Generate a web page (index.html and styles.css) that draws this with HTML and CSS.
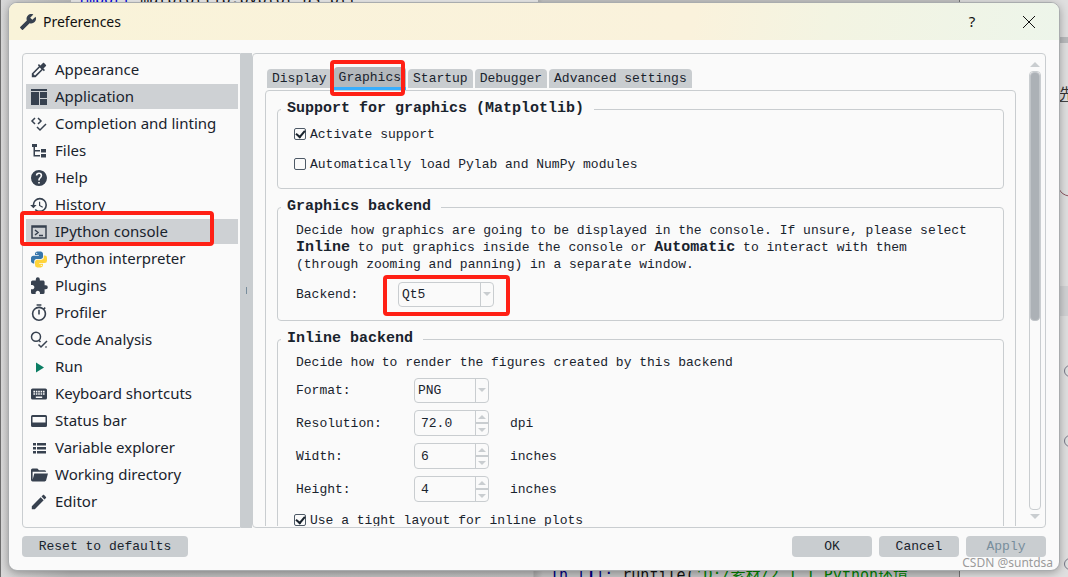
FILE: index.html
```html
<!DOCTYPE html>
<html lang="en">
<head>
    <meta charset="UTF-8">
    <meta name="viewport" content="width=device-width, initial-scale=1.0">
    <title>Preferences</title>
    <link rel="stylesheet" href="styles.css">
</head>
<body>

    <!-- editor window behind the dialog -->
    <div class="backdrop" aria-hidden="true">
        <div class="editor-page"></div>
        <div class="side-page"></div>
        <div class="side-bar"></div>
        <div class="side-row"></div>
        <code class="code-top"><b>import</b> matplotlib.pyplot as plt</code>
        <code class="code-bottom"><i>In [</i><b>1</b><i>]:</i> runfile(<span>'D:/素材/2_1_1_Python环境</span></code>
        <span class="side-text">先</span>
        <svg class="side-arc" viewBox="0 0 10 10" width="10" height="10">
            <path d="M0,2Q3,8 10,9" stroke="#8a5560"/>
        </svg>
        <span class="side-dot"></span>
        <span class="side-dot side-dot-low"></span>
        <span class="side-dot side-dot-end"></span>
    </div>

    <div class="dialog">
        <header class="titlebar">
            <svg class="title-icon" viewBox="1 1 22 22"><path transform="matrix(-1 0 0 1 24 0)" d="M22.7,19L13.6,9.9C14.5,7.6 14,4.9 12.1,3C10.1,1 7.1,0.6 4.7,1.7L9,6L6,9L1.6,4.7C0.4,7.1 0.9,10.1 2.9,12.1C4.8,14 7.5,14.5 9.8,13.6L18.9,22.7C19.3,23.1 19.9,23.1 20.3,22.7L22.6,20.4C23.1,20 23.1,19.3 22.7,19Z"/></svg>
            <h1>Preferences</h1>
            <button class="title-btn" type="button">?</button>
            <button class="title-btn" type="button" aria-label="Close">
                <svg class="close-icon" viewBox="0 0 14 14"><path d="M1,1L13,13M13,1L1,13"/></svg>
            </button>
        </header>

        <main class="content">
            <nav class="pages">
                <ul>
                    <li><a href="#"><svg viewBox="2 2 20 20"><path d="M6.92,19L5,17.08L13.06,9L15,10.94M20.71,5.63L18.37,3.29C18,2.9 17.35,2.9 16.96,3.29L13.84,6.41L11.91,4.5L10.5,5.91L11.92,7.33L3,16.25V21H7.75L16.67,12.08L18.09,13.5L19.5,12.09L17.58,10.17L20.7,7.05C21.1,6.65 21.1,6 20.71,5.63Z"/></svg>Appearance</a></li>
                    <li><a href="#" class="selected"><svg viewBox="0 0 16 16"><path d="M0,0H16V2H0ZM0,3H8V16H0ZM9,3H16V9H9ZM9,10H16V16H9Z"/></svg>Application</a></li>
                    <li><a href="#"><svg class="line" viewBox="0 0 16 16"><path d="M4,2L1,5L4,8M7,2L10,5L7,8M6,11L9,14L15,8"/></svg>Completion and linting</a></li>
                    <li><a href="#"><svg viewBox="0 0 16 16"><path d="M1,1H6V4H1ZM2.500,4H4V7H9V8.500H4V12H9V13.500H2.500ZM10,6H15V9.500H10ZM10,11H15V14.500H10Z"/></svg>Files</a></li>
                    <li><a href="#"><svg viewBox="2 2 20 20"><path d="M15.07,11.25L14.17,12.17C13.45,12.89 13,13.5 13,15H11V14.5C11,13.39 11.45,12.39 12.17,11.67L13.41,10.41C13.78,10.05 14,9.55 14,9C14,7.89 13.1,7 12,7A2,2 0 0,0 10,9H8A4,4 0 0,1 12,5A4,4 0 0,1 16,9C16,9.88 15.64,10.67 15.07,11.25M13,19H11V17H13M12,2A10,10 0 0,0 2,12A10,10 0 0,0 12,22A10,10 0 0,0 22,12C22,6.47 17.5,2 12,2Z"/></svg>Help</a></li>
                    <li><a href="#"><svg viewBox="2 2 20 20"><path d="M13.5,8H12V13L16.28,15.54L17,14.33L13.5,12.25V8M13,3A9,9 0 0,0 4,12H1L4.96,16.03L9,12H6A7,7 0 0,1 13,5A7,7 0 0,1 20,12A7,7 0 0,1 13,19C11.07,19 9.32,18.21 8.06,16.94L6.64,18.36C8.27,20 10.5,21 13,21A9,9 0 0,0 22,12A9,9 0 0,0 13,3"/></svg>History</a></li>
                    <li class="marked"><a href="#" class="selected"><svg class="line" viewBox="0 0 16 16"><path d="M1,2H15V14H1ZM1,3H15M4,6L7,8.500L4,11M8,11.500H12"/></svg>IPython console</a><span class="mark mark-page"></span></li>
                    <li><a href="#"><svg viewBox="2 2 20 20"><path fill="#3776ab" d="M4.86,17.5C3.28,17.5 2,16.22 2,14.64V10.86C2,9.28 3.28,8 4.86,8H12C12,7.61 11.68,7.04 11.29,7.04H7V5.36C7,3.78 8.28,2.5 9.86,2.5H14.14C15.72,2.5 17,3.78 17,5.36V9.11C17,10.69 15.72,11.96 14.14,11.96H8.89C7.31,11.96 6.04,13.24 6.04,14.82V17.5H4.86M9.14,5.71A0.8,0.8 0 0,0 9.14,4.11A0.8,0.8 0 0,0 9.14,5.71Z"/><path fill="#ffd43b" d="M19.14,7.5A2.86,2.86 0 0,1 22,10.36V14.14A2.86,2.86 0 0,1 19.14,17H12C12,17.39 12.32,17.96 12.71,17.96H17V19.64A2.86,2.86 0 0,1 14.14,22.5H9.86A2.86,2.86 0 0,1 7,19.64V15.89C7,14.31 8.28,13.04 9.86,13.04H15.11C16.69,13.04 17.96,11.76 17.96,10.18V7.5H19.14M14.86,19.29A0.8,0.8 0 0,0 14.86,20.89A0.8,0.8 0 0,0 14.86,19.29Z"/></svg>Python interpreter</a></li>
                    <li><a href="#"><svg viewBox="2 2 20 20"><path d="M20.5,11H19V7C19,5.89 18.1,5 17,5H13V3.5A2.5,2.5 0 0,0 10.5,1A2.5,2.5 0 0,0 8,3.5V5H4A2,2 0 0,0 2,7V10.8H3.5C5,10.8 6.2,12 6.2,13.5C6.2,15 5,16.2 3.5,16.2H2V20A2,2 0 0,0 4,22H7.8V20.5C7.8,19 9,17.8 10.5,17.8C12,17.8 13.2,19 13.2,20.5V22H17A2,2 0 0,0 19,20V16H20.5A2.5,2.5 0 0,0 23,13.5A2.5,2.5 0 0,0 20.5,11Z"/></svg>Plugins</a></li>
                    <li><a href="#"><svg viewBox="2 2 20 20"><path d="M12,20A7,7 0 0,1 5,13A7,7 0 0,1 12,6A7,7 0 0,1 19,13A7,7 0 0,1 12,20M19.03,7.39L20.45,5.97C20,5.46 19.55,5 19.04,4.56L17.62,6C16.07,4.74 14.12,4 12,4A9,9 0 0,0 3,13A9,9 0 0,0 12,22C17,22 21,17.97 21,13C21,10.88 20.26,8.93 19.03,7.39M11,14H13V8H11M15,1H9V3H15V1Z"/></svg>Profiler</a></li>
                    <li><a href="#"><svg class="line" viewBox="0 0 16 16"><path d="M9.500,4.800A4.500,4.500 0 1,1 0.500,4.800A4.500,4.500 0 1,1 9.500,4.800ZM8,8.500L9.500,10M7.500,12.500L10,15L16,9M14.500,14.500L15.500,15.500"/></svg>Code Analysis</a></li>
                    <li><a href="#"><svg viewBox="0 0 16 16"><path fill="#0a7d63" d="M5,3.500L13,8.500L5,13.500Z"/></svg>Run</a></li>
                    <li><a href="#"><svg viewBox="2 2 20 20"><path d="M19,10H17V8H19M19,13H17V11H19M16,10H14V8H16M16,13H14V11H16M16,17H8V15H16M7,10H5V8H7M7,13H5V11H7M8,11H10V13H8M8,8H10V10H8M11,11H13V13H11M11,8H13V10H11M20,5H4C2.89,5 2,5.89 2,7V17A2,2 0 0,0 4,19H20A2,2 0 0,0 22,17V7C22,5.89 21.1,5 20,5Z"/></svg>Keyboard shortcuts</a></li>
                    <li><a href="#"><svg viewBox="0 0 16 16"><path fill-rule="evenodd" d="M1.500,2H14.500A1.500,1.500 0 0,1 16,3.500V12.500A1.500,1.500 0 0,1 14.500,14H1.500A1.500,1.500 0 0,1 0,12.500V3.500A1.500,1.500 0 0,1 1.500,2ZM1.500,4V9.500H14.500V4Z"/></svg>Status bar</a></li>
                    <li><a href="#"><svg viewBox="0 0 16 16"><path d="M2,3H5V5.500H2ZM6,3H15V5.500H6ZM2,7H5V9.500H2ZM6,7H15V9.500H6ZM2,11H5V13.500H2ZM6,11H15V13.500H6Z"/></svg>Variable explorer</a></li>
                    <li><a href="#"><svg viewBox="2 2 20 20"><path d="M19,20H4C2.89,20 2,19.1 2,18V6C2,4.89 2.89,4 4,4H10L12,6H19A2,2 0 0,1 21,8H21L4,8V18L6.14,10H23.21L20.93,18.5C20.7,19.37 19.92,20 19,20Z"/></svg>Working directory</a></li>
                    <li><a href="#"><svg viewBox="2 2 20 20"><path d="M20.71,7.04C21.1,6.65 21.1,6 20.71,5.63L18.37,3.29C18,2.9 17.35,2.9 16.96,3.29L15.12,5.12L18.87,8.87M3,17.25V21H6.75L17.81,9.93L14.06,6.18L3,17.25Z"/></svg>Editor</a></li>
                </ul>
            </nav>

            <div class="splitter"><span></span></div>

            <section class="page">
                <div class="page-view">
                    <div class="tabs">
                        <button class="tab" type="button">Display</button>
                        <div class="marked">
                            <button class="tab active" type="button">Graphics</button>
                            <span class="mark mark-tab"></span>
                        </div>
                        <button class="tab" type="button">Startup</button>
                        <button class="tab" type="button">Debugger</button>
                        <button class="tab" type="button">Advanced settings</button>
                    </div>

                    <div class="tab-page">
                        <fieldset class="group group-support">
                            <legend>Support for graphics (Matplotlib)</legend>
                            <label class="check"><input type="checkbox" checked>Activate support</label>
                            <label class="check"><input type="checkbox">Automatically load Pylab and NumPy modules</label>
                        </fieldset>

                        <fieldset class="group group-backend">
                            <legend>Graphics backend</legend>
                            <p>Decide how graphics are going to be displayed in the console. If unsure, please select <br><b>Inline</b> to put graphics inside the console or <b>Automatic</b> to interact with them <br>(through zooming and panning) in a separate window.</p>
                            <div class="row row-backend">
                                <label for="backend">Backend:</label>
                                <div class="combo marked">
                                    <select id="backend">
                                        <option>Qt5</option>
                                    </select>
                                    <span class="combo-arrow"></span>
                                    <span class="mark mark-backend"></span>
                                </div>
                            </div>
                        </fieldset>

                        <fieldset class="group group-inline">
                            <legend>Inline backend</legend>
                            <p>Decide how to render the figures created by this backend</p>
                            <div class="row">
                                <label for="format">Format:</label>
                                <div class="combo">
                                    <select id="format">
                                        <option>PNG</option>
                                    </select>
                                    <span class="combo-arrow"></span>
                                </div>
                            </div>
                            <div class="row">
                                <label for="resolution">Resolution:</label>
                                <div class="spin">
                                    <input type="number" id="resolution" value="72.0" step="0.1">
                                    <div class="spin-buttons">
                                        <button class="up" type="button" aria-label="Increase"></button>
                                        <button class="down" type="button" aria-label="Decrease"></button>
                                    </div>
                                </div>
                                <span class="unit">dpi</span>
                            </div>
                            <div class="row">
                                <label for="width">Width:</label>
                                <div class="spin">
                                    <input type="number" id="width" value="6">
                                    <div class="spin-buttons">
                                        <button class="up" type="button" aria-label="Increase"></button>
                                        <button class="down" type="button" aria-label="Decrease"></button>
                                    </div>
                                </div>
                                <span class="unit">inches</span>
                            </div>
                            <div class="row">
                                <label for="height">Height:</label>
                                <div class="spin">
                                    <input type="number" id="height" value="4">
                                    <div class="spin-buttons">
                                        <button class="up" type="button" aria-label="Increase"></button>
                                        <button class="down" type="button" aria-label="Decrease"></button>
                                    </div>
                                </div>
                                <span class="unit">inches</span>
                            </div>
                            <label class="check"><input type="checkbox" checked>Use a tight layout for inline plots</label>
                        </fieldset>
                    </div>
                </div>

                <div class="scrollbar">
                    <span class="arrow-up"></span>
                    <div class="track"><div class="thumb"></div></div>
                    <span class="arrow-down"></span>
                </div>
            </section>
        </main>

        <footer class="buttons">
            <button class="btn btn-reset" type="button">Reset to defaults</button>
            <button class="btn" type="button">OK</button>
            <button class="btn" type="button">Cancel</button>
            <button class="btn" type="button" disabled>Apply</button>
        </footer>
    </div>

    <span class="watermark">CSDN @suntdsa</span>

</body>
</html>
```

FILE: styles.css
```css
* {
    box-sizing: border-box;
}

body {
    margin: 0;
    height: 100vh;
    padding: 2px 8px 6px;
    display: flex;
    position: relative;
    overflow: hidden;
    background-color: #d2d2d2;
    color: #19232d;
    font-family: "Liberation Mono", monospace;
    font-size: 13px;
    line-height: 17px;
}

button, input, select {
    font: inherit;
    color: inherit;
    margin: 0;
    padding: 0;
    border: none;
    background: none;
}

/* window behind */
.backdrop {
    position: absolute;
    inset: 0;
    overflow: hidden;
    border-left: 1px solid #6e6e6e;
    background: linear-gradient(90deg, #d8d8d8 0, #bdbdbd 70px, #c0c0c0 532px, #a8a8a8 533px, #c4c4c4 542px, #c4c4c4 100%);
}

.editor-page {
    position: absolute;
    left: 70px;
    right: 530px;
    top: 0;
    height: 4px;
    background-color: #ececec;
}

.side-page {
    position: absolute;
    right: 0;
    top: 0;
    bottom: 0;
    width: 109px;
    background-color: #dfdfdf;
    border-left: 1px solid #777;
}

.side-bar,
.side-row {
    position: absolute;
    right: 0;
    top: 37px;
    width: 20px;
    height: 6px;
    background-color: #b8babc;
}

.side-row {
    top: 286px;
    height: 30px;
    background-color: #d0d1d3;
}

.code-top,
.code-bottom {
    position: absolute;
    font: 15px/18px "DejaVu Sans Mono", "Noto Sans CJK SC", monospace;
    color: #111;
    white-space: pre;
}

.code-top {
    left: 76px;
    top: -10px;
}

.code-top b {
    font-weight: normal;
    color: #0000e0;
}

.code-bottom {
    left: 549px;
    top: 566px;
}

.code-bottom i,
.code-bottom b {
    font-style: normal;
    color: #000080;
}

.code-bottom span {
    color: #008000;
}

.side-text {
    position: absolute;
    right: -6px;
    top: 84px;
    border-bottom: 1px solid #444;
    font: 15px/17px "Noto Sans CJK SC", sans-serif;
    color: #333;
}

.side-arc {
    position: absolute;
    right: -1px;
    top: 187px;
    fill: none;
}

.side-dot {
    position: absolute;
    right: -8px;
    top: 365px;
    width: 12px;
    height: 12px;
    border: 1px solid #778;
    border-radius: 50%;
}

.side-dot-low {
    top: 435px;
}

.side-dot-end {
    top: 558px;
}

/* dialog */
.dialog {
    position: relative;
    flex: 1;
    min-width: 0;
    display: flex;
    flex-direction: column;
    background-color: #fafafa;
    border: 1px solid #a9acae;
    border-radius: 9px;
    box-shadow: 0 2px 8px rgba(0, 0, 0, 0.3);
    overflow: hidden;
}

.titlebar {
    flex: none;
    display: flex;
    align-items: center;
    height: 37px;
    padding: 0 6px 0 11px;
    background: linear-gradient(100deg, #f9f3d9 0%, #faf2dc 65%, #f3f4e2 78%, #edf5ea 100%);
}

.title-icon {
    width: 16px;
    height: 16px;
    fill: #37414f;
}

.titlebar h1 {
    flex: 1;
    margin: 0 0 0 7px;
    font: 14px/20px "Noto Sans", sans-serif;
    color: #111;
}

.title-btn {
    display: flex;
    align-items: center;
    justify-content: center;
    width: 48px;
    height: 36px;
    margin-left: 9px;
    font-family: "Noto Sans", sans-serif;
    font-size: 15px;
    color: #111;
}

.close-icon {
    width: 14px;
    height: 14px;
    fill: none;
    stroke: #111;
}

.content {
    flex: 1;
    min-height: 0;
    display: flex;
    padding: 13px 13px 0;
}

.pages {
    flex: 0 0 219px;
    padding: 3px;
    border: 1px solid #c9cdd0;
    border-radius: 4px 0 0 4px;
}

.pages ul {
    list-style: none;
    margin: 0;
    padding: 0;
    display: flex;
    flex-direction: column;
    gap: 2px;
}

.pages a {
    display: flex;
    align-items: center;
    gap: 8px;
    height: 25px;
    margin-right: -1px;
    padding-left: 5px;
    font-family: "Noto Sans", sans-serif;
    font-size: 15px;
    color: #19232d;
    text-decoration: none;
}

.pages a.selected {
    background-color: #ced1d4;
}

.pages svg {
    width: 16px;
    height: 16px;
    overflow: visible;
    fill: #37414f;
}

.pages svg.line {
    fill: none;
    stroke: #37414f;
    stroke-width: 1.5;
}

.splitter {
    flex: 0 0 11px;
    display: flex;
    align-items: center;
    justify-content: center;
    background-color: #c9cdd0;
}

.splitter span {
    width: 1px;
    height: 7px;
    background-color: #788d9c;
}

.page {
    flex: 1;
    min-width: 0;
    display: flex;
    justify-content: space-between;
    padding: 1px 4px 1px 12px;
    border: 1px solid #c9cdd0;
    border-radius: 4px;
}

.page-view {
    flex: 1;
    min-width: 0;
    overflow: hidden;
}

.tabs {
    display: flex;
    align-items: center;
    gap: 2px;
    height: 35px;
    padding: 12px 0 0 2px;
}

.tab {
    display: block;
    height: 19px;
    padding: 0 5px;
    background-color: #c9cdd0;
    border-radius: 4px 4px 0 0;
    line-height: 19px;
}

.tab.active {
    height: 23px;
    background-color: #b4b8bc;
    border-bottom: 3px solid #37aefe;
}

.tab-page {
    padding: 9px 11px 0;
    border: 1px solid #c9cdd0;
    border-radius: 4px 4px 0 0;
}

/* group boxes */
.group {
    min-width: 0;
    margin: 0 0 9px;
    padding: 0 15px 0 18px;
    border: 1px solid #c9cdd0;
    border-radius: 4px;
}

.group legend {
    margin-left: -15px;
    padding: 0 10px 0 6px;
    line-height: 18px;
}

.group legend,
.group b {
    font-size: 15px;
    font-weight: bold;
}

.group p {
    margin: 6px 0 -1px;
    line-height: 17px;
}

.check {
    display: flex;
    align-items: center;
    gap: 4px;
    height: 18px;
    margin-left: -2px;
}

.check input {
    appearance: none;
    display: flex;
    align-items: center;
    justify-content: center;
    width: 12px;
    height: 12px;
    border: 1px solid #4d5966;
    border-radius: 2px;
}

.check input:checked::before {
    content: "";
    width: 7px;
    height: 4px;
    margin-bottom: 2px;
    border: solid #19232d;
    border-width: 0 0 2px 2px;
    transform: rotate(-50deg);
}

.group-support {
    padding-top: 7px;
    padding-bottom: 15px;
}

.group-support .check + .check {
    margin-top: 12px;
}

.group-backend {
    padding-bottom: 13px;
}

.row {
    display: flex;
    align-items: center;
    height: 26px;
    margin-top: 7px;
}

.row label {
    width: 118px;
}

.row-backend {
    margin-top: 9px;
}

.row-backend label {
    width: 102px;
}

.combo,
.spin {
    display: flex;
    width: 75px;
    height: 25px;
    border: 1px solid #c9cdd0;
    border-radius: 4px;
}

.spin {
    height: 26px;
}

.row-backend .combo {
    width: 96px;
}

.combo select {
    appearance: none;
    flex: 1;
    min-width: 0;
    padding-left: 3px;
}

.combo-arrow {
    display: flex;
    align-items: center;
    justify-content: center;
    width: 13px;
    border-left: 1px solid #c9cdd0;
}

.combo-arrow::before,
.down::before,
.arrow-down::before {
    content: "";
    border: 4px solid transparent;
    border-top-color: #c9cdd0;
    border-bottom: none;
}

.up::before,
.arrow-up::before {
    content: "";
    border: 4px solid transparent;
    border-bottom-color: #c9cdd0;
    border-top: none;
}

.spin input {
    appearance: textfield;
    flex: 1;
    min-width: 0;
    padding-left: 6px;
}

.spin input::-webkit-inner-spin-button {
    display: none;
}

.spin-buttons {
    display: flex;
    flex-direction: column;
    width: 13px;
    border-left: 1px solid #c9cdd0;
}

.spin-buttons button {
    flex: 1;
    display: flex;
    align-items: center;
    justify-content: center;
}

.spin-buttons .up {
    border-bottom: 2px solid #c9cdd0;
}

.unit {
    margin-left: 21px;
}

.group-inline .check {
    margin-top: 9px;
}

/* scrollbar */
.scrollbar {
    flex: 0 0 12px;
    display: flex;
    flex-direction: column;
    margin: 7px 0 7px 13px;
}

.arrow-up,
.arrow-down {
    display: flex;
    align-items: flex-start;
    justify-content: center;
    height: 9px;
}

.arrow-down {
    align-items: flex-end;
}

.arrow-up::before,
.arrow-down::before {
    border-width: 5px;
}

.arrow-up::before {
    border-top: none;
}

.arrow-down::before {
    border-bottom: none;
}

.track {
    flex: 1;
    border: 1px solid #c9cdd0;
    border-radius: 4px;
}

.thumb {
    height: 57%;
    background-color: #acb1b6;
    border: 1px solid #c0c4c8;
    border-radius: 4px;
}

/* bottom buttons */
.buttons {
    flex: none;
    display: flex;
    gap: 7px;
    padding: 8px 13px 13px;
}

.btn {
    width: 80px;
    height: 21px;
    background-color: #c9cdd0;
    border-radius: 4px;
    line-height: 21px;
}

.btn-reset {
    width: 166px;
    margin-right: auto;
}

.btn:disabled {
    color: #788d9c;
}

/* red highlight boxes */
.marked {
    position: relative;
}

.mark {
    position: absolute;
    z-index: 2;
    border: 4px solid #ff2015;
    border-radius: 4px;
    pointer-events: none;
}

.mark-page {
    left: -6px;
    right: 23px;
    top: -8px;
    bottom: -2px;
}

.mark-tab {
    left: -4px;
    right: 1px;
    top: -7px;
    bottom: -6px;
}

.mark-backend {
    left: -16px;
    right: -17px;
    top: -8px;
    bottom: -10px;
}

.watermark {
    position: absolute;
    right: 15px;
    bottom: 6px;
    font: 12px/16px "Noto Sans", sans-serif;
    color: #9b9b9b;
}
```
